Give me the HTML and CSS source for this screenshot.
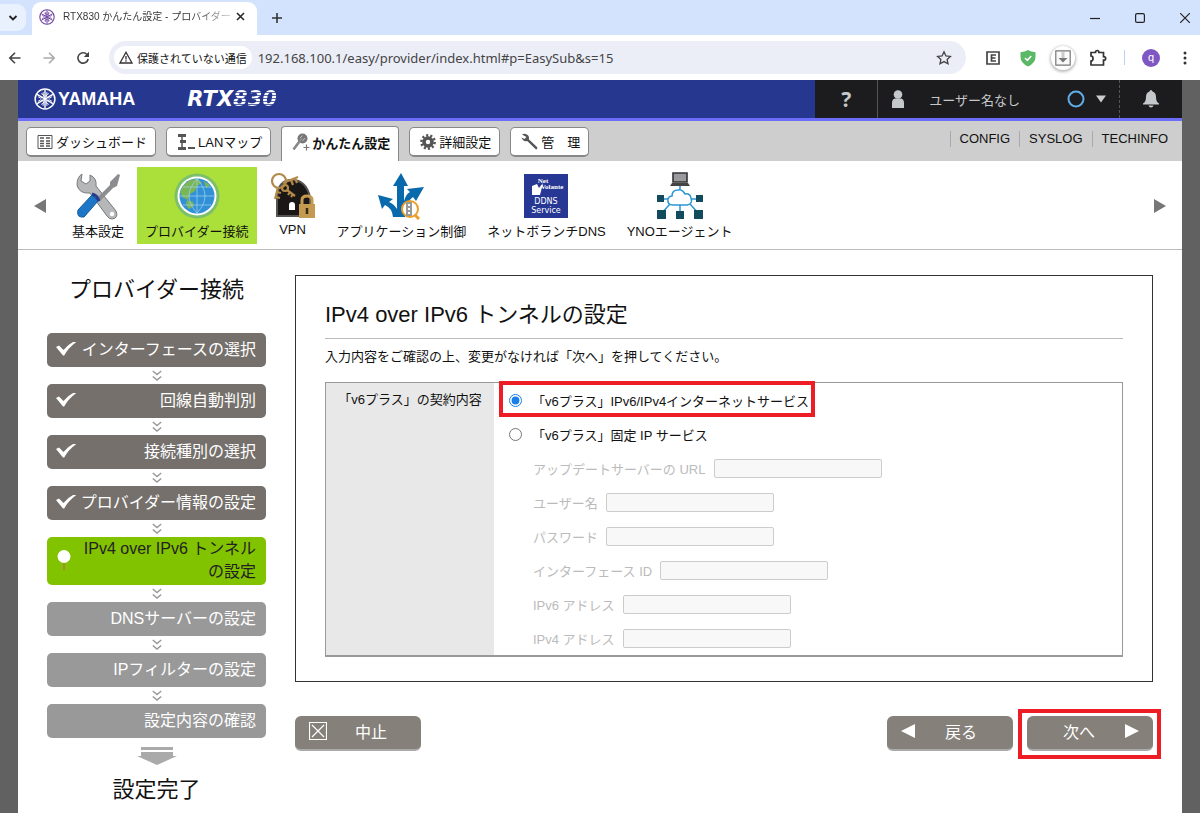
FILE: index.html
```html
<!DOCTYPE html>
<html lang="ja">

<head>
    <meta charset="UTF-8" />
    <meta name="viewport" content="width=device-width, initial-scale=1.0" />
    <title>RTX830 かんたん設定 - プロバイダー接続</title>
    <link rel="stylesheet" href="styles.css">
</head>

<body>

    <!-- Shared shapes -->
    <svg class="defs" width="0" height="0" aria-hidden="true">
        <symbol id="emblem" viewBox="0 0 24 24">
            <g fill="none" stroke="currentColor">
                <circle cx="12" cy="12" r="10.8" stroke-width="1.6" />
                <path d="M12 2v20M3.4 7l17.2 10M3.4 17L20.6 7" stroke-width="1.5" />
                <path d="M10 4.500v3l2 2 2-2v-3M10 19.500v-3l2-2 2 2v3M4.500 9.500l2.600 1.500 2.700-.7.700-2.700-2.600-1.500M19.500 14.500l-2.600-1.500-2.700.7-.7 2.700 2.600 1.500M4.500 14.500l2.600-1.500 2.700.7.700 2.700-2.600 1.500M19.500 9.500l-2.600 1.500-2.700-.7-.7-2.700 2.600-1.500" stroke-width="1" />
            </g>
        </symbol>
        <symbol id="check" viewBox="0 0 20 14">
            <path d="M0 5l3-1.500 4.500 4.500Q12 2.500 17 0h3.200Q12 6 8.200 13.500H7z" fill="#fff" />
        </symbol>
        <symbol id="chevrons" viewBox="0 0 10 11">
            <path d="M.8 1L5 4.500 9.200 1M.8 6.500L5 10l4.200-3.500" fill="none" stroke="#999" stroke-width="1.500" />
        </symbol>
    </svg>

    <!-- Browser tab strip -->
    <div class="tabstrip">
        <button class="tab-search" aria-label="タブを検索">
            <svg width="10" height="10" viewBox="0 0 10 10"><path d="M1.500 3L5 6.500 8.500 3" fill="none" stroke="#222" stroke-width="1.800" /></svg>
        </button>
        <div class="browser-tab">
            <svg class="favicon" width="16" height="16"><use href="#emblem" /></svg>
            <span class="tab-title">RTX830 かんたん設定 - プロバイダー</span>
            <button class="plain" aria-label="閉じる">
                <svg width="9" height="9" viewBox="0 0 9 9"><path d="M1 1l7 7M8 1L1 8" stroke="#222" stroke-width="1.500" /></svg>
            </button>
        </div>
        <button class="plain new-tab" aria-label="新しいタブ">
            <svg width="10" height="10" viewBox="0 0 10 10"><path d="M5 0v10M0 5h10" stroke="#333" stroke-width="1.600" /></svg>
        </button>
        <div class="window-controls">
            <svg width="10" height="10" viewBox="0 0 10 10"><path d="M0 5.500h10" stroke="#222" stroke-width="1.200" /></svg>
            <svg width="10" height="10" viewBox="0 0 10 10"><rect x=".6" y=".6" width="8.800" height="8.800" rx="1.500" fill="none" stroke="#222" stroke-width="1.200" /></svg>
            <svg width="10" height="10" viewBox="0 0 10 10"><path d="M0 0l10 10M10 0L0 10" stroke="#222" stroke-width="1.200" /></svg>
        </div>
    </div>

    <!-- Browser toolbar -->
    <div class="toolbar">
        <div class="nav-buttons">
            <button class="plain" aria-label="戻る"><svg width="16" height="16" viewBox="0 0 16 16"><path d="M13.500 8H3M8 2.800L2.800 8 8 13.200" fill="none" stroke="#444" stroke-width="1.600" /></svg></button>
            <button class="plain" aria-label="進む"><svg width="16" height="16" viewBox="0 0 16 16"><path d="M2.500 8H13M8 2.800L13.200 8 8 13.200" fill="none" stroke="#aaa" stroke-width="1.600" /></svg></button>
            <button class="plain" aria-label="再読み込み"><svg width="16" height="16" viewBox="0 0 16 16"><path d="M13.200 9A5.200 5.200 0 1 1 12 4.500L13 5.800" fill="none" stroke="#444" stroke-width="1.600" /><path d="M14 1.800V7H8.800z" fill="#444" /></svg></button>
        </div>
        <div class="omnibox">
            <span class="security">
                <svg width="14" height="13" viewBox="0 0 14 13"><path d="M7 1.300L13 12H1zM7 5v3.500M7 9.300v1.500" fill="none" stroke="#333" stroke-width="1.300" /></svg>
                保護されていない通信
            </span>
            <span class="url">192.168.100.1/easy/provider/index.html#p=EasySub&amp;s=15</span>
            <svg width="16" height="16" viewBox="0 0 16 16"><path d="M8 1.800l1.900 4.100 4.500.5-3.300 3 .9 4.400L8 11.600l-4 2.200.9-4.400-3.300-3 4.500-.5z" fill="none" stroke="#444" stroke-width="1.300" /></svg>
        </div>
        <div class="extensions">
            <svg width="18" height="18" viewBox="0 0 18 18"><path d="M3 3h12v12H3zM12 6H7.500v6H12M7.500 9h4" fill="none" stroke="#444" stroke-width="1.700" /></svg>
            <svg width="18" height="18" viewBox="0 0 18 18"><path d="M9 1q3 2 7.500 2.200V8q0 6-7.500 9.500Q1.500 14 1.500 8V3.200Q6 3 9 1z" fill="#5bb866" /><path d="M6 9l2.300 2.300L12.200 7" fill="none" stroke="#fff" stroke-width="1.500" /></svg>
            <span class="raised"><svg width="18" height="18" viewBox="0 0 18 18"><path d="M1.800 1.800h14.400v14.400H1.800z" fill="#fafafa" stroke="#777" stroke-width="1.200" /><path d="M7.500 3h3v6h-3z" fill="#ccc" /><path d="M4.500 9h9L9 13.500z" fill="#777" /></svg></span>
            <svg width="18" height="18" viewBox="0 0 18 18"><path d="M2 3.500h4.500q0-2 1.700-2t1.700 2h4.600v4.200q2.200 0 2.200 1.700t-2.200 1.700v4.900H2v-4q2 0 2-2.500t-2-2.500z" fill="none" stroke="#333" stroke-width="1.700" /></svg>
            <span class="divider"></span>
            <span class="avatar">q</span>
            <svg width="16" height="16" viewBox="0 0 16 16" fill="#333"><circle cx="8" cy="3" r="1.500" /><circle cx="8" cy="8" r="1.500" /><circle cx="8" cy="13" r="1.500" /></svg>
        </div>
    </div>

    <!-- Router settings page -->
    <div class="page">
        <header class="header">
            <div class="brand">
                <svg width="22" height="22"><use href="#emblem" /></svg>
                <span class="brand-name">YAMAHA</span>
                <span class="model">RTX<span class="model-number">830</span></span>
            </div>
            <div class="status">
                <a class="help" href="#" aria-label="ヘルプ">?</a>
                <div class="user">
                    <svg width="14" height="18" viewBox="0 0 14 18" fill="#c5c8ca"><circle cx="7" cy="4.500" r="4.300" /><path d="M1 18v-5q0-4 3-4.500h6q3 .5 3 4.500v5z" /></svg>
                    <span class="user-name">ユーザー名なし</span>
                    <svg width="18" height="18" viewBox="0 0 18 18"><circle cx="9" cy="9" r="7.500" fill="none" stroke="#5eaee8" stroke-width="2" /></svg>
                    <svg width="10" height="8" viewBox="0 0 10 8"><path d="M0 .5h10L5 7.500z" fill="#ccc" /></svg>
                </div>
                <a class="bell" href="#" aria-label="通知">
                    <svg width="16" height="18" viewBox="0 0 16 18" fill="#c5c8ca"><path d="M8 0q1.200 0 1.500 1.500Q13 2.500 13 7q0 5 3 6.500v1H0v-1Q3 12 3 7q0-4.500 3.500-5.500Q6.800 0 8 0zM5.500 15.500h5Q10 17.500 8 17.500t-2.500-2z" /></svg>
                </a>
            </div>
        </header>

        <nav class="tabs">
            <a class="tab" href="#">
                <svg width="16" height="16" viewBox="0 0 16 16"><path d="M1 1.500h14v13H1z" fill="#fff" stroke="#555" /><path d="M3 4h4M3 7h4M3 9.500h4M3 12h4M9 4h4M9 7h4M9 9.500h4M9 12h4" stroke="#555" stroke-width="1.600" /></svg>
                ダッシュボード</a>
            <a class="tab" href="#">
                <svg width="18" height="18" viewBox="0 0 18 18"><path d="M1 1h8v3H1zM3 7h6v3H3zM1 14h8v3H1zM11 14h7v2h-7z" fill="#555" /><path d="M5 2v14" stroke="#555" stroke-width="1.500" /></svg>
                LANマップ</a>
            <a class="tab active" href="#">
                <svg width="18" height="18" viewBox="0 0 18 18"><circle cx="10.500" cy="5.500" r="5" fill="#777" /><path d="M10 5L1.500 16.500" stroke="#888" stroke-width="2.600" /><path d="M8 5l2.500-2.500M10.500 8L13 5" stroke="#bbb" /><path d="M14.500 11.500v6M11.500 14.500h6" stroke="#777" stroke-width="1.200" /></svg>
                かんたん設定</a>
            <a class="tab" href="#">
                <svg width="16" height="16" viewBox="0 0 16 16"><circle cx="8" cy="8" r="4" fill="none" stroke="#555" stroke-width="3.600" /><circle cx="8" cy="8" r="6.600" fill="none" stroke="#555" stroke-width="2.600" stroke-dasharray="2.100 2.047" /></svg>
                詳細設定</a>
            <a class="tab" href="#">
                <svg width="17" height="17" viewBox="0 0 17 17"><path d="M1 1.500Q4-.5 7 2.200 8.500 4 7.800 6.200L16 14q1 2-1 2.500L6.200 8Q2 9 .5 4.500L3.500 6 5.500 4z" fill="#555" /></svg>
                管　理</a>
            <div class="tools">
                <a href="#">CONFIG</a>
                <a href="#">SYSLOG</a>
                <a href="#">TECHINFO</a>
            </div>
        </nav>

        <nav class="submenu">
            <button class="plain" aria-label="前へ"><svg width="12" height="14" viewBox="0 0 12 14"><path d="M12 0v14L0 7z" fill="#777" /></svg></button>
            <div class="menu-items">
                <a class="item" href="#">
                    <svg width="46" height="48" viewBox="0 0 46 48">
                        <path d="M7 2l-1 7 5 3 4-3V3q7 3 6 11l20 25q3 7-4 8-3 0-5-3L15 21Q4 22 2 13q0-8 5-11z" fill="#b5b7b9" stroke="#77797b" />
                        <circle cx="37" cy="42" r="2.200" fill="#fff" />
                        <path d="M35 10l8-8 2 1-3 11-4 2L24 30l-3-3 14-14z" fill="#8b8d8f" />
                        <path d="M17 23l6 6L9 45Q1 46 3 38z" fill="#1d77c6" stroke="#145997" />
                        <path d="M17 22q5 1 7 7" fill="none" stroke="#233b91" stroke-width="3" />
                    </svg>
                    基本設定</a>
                <a class="item current" href="#">
                    <svg width="46" height="48" viewBox="0 0 46 48">
                        <circle cx="23" cy="24" r="22.500" fill="#7dc06b" />
                        <circle cx="23" cy="24" r="19.500" fill="#fff" />
                        <circle cx="23" cy="24" r="17.500" fill="#3291d6" />
                        <path d="M9 14Q15 6 24 7l4 4-5 3-2 5-5 3-2 6-6-3-2-5zM30 9l6 4-4 3zM13 28l6 2 1 4-5 3q-4-3-2-9z" fill="#7ab656" />
                        <path d="M23 7v34M6 24h34M9 15h28M9 33h28M23 7q-16 17 0 34M23 7q16 17 0 34" fill="none" stroke="#a5d3ee" stroke-width=".7" />
                    </svg>
                    プロバイダー接続</a>
                <a class="item" href="#">
                    <svg width="46" height="46" viewBox="0 0 46 46">
                        <path d="M7 44V25Q8 8 22 8t18 17v19z" fill="#1b1716" stroke="#565453" stroke-width="2" />
                        <path d="M19 38v-5q0-3 3-3t3 3v5z" fill="#fff" />
                        <g fill="none" stroke="#b38a47" stroke-width="2.200">
                            <circle cx="9" cy="9" r="7" />
                            <path d="M13 11l15-6M21 8l2 5M25 6l2 5M8 15L5 27M7 20l4 1M6 25l4 1" />
                            <circle cx="15" cy="16" r="3" />
                            <path d="M17 18l8 6M20 20l-2 3M23 22l-2 3" />
                        </g>
                        <path d="M32 33v-5q0-4 5-4t5 4v5" fill="none" stroke="#c49a50" stroke-width="3" />
                        <path d="M29 32h16v14H29z" fill="#c39a50" /><path d="M37 36v6" stroke="#352814" stroke-width="2.500" />
                    </svg>
                    VPN</a>
                <a class="item" href="#">
                    <svg width="46" height="48" viewBox="0 0 46 48">
                        <path d="M23 1l7 13h-4v15q2-7 6-9l-3-3 17-2-8 14-3-4q-6 5-7 9l-1 11H15q-1-9-8-12l-3 4-4-14 15 4-4 3q5 2 8 7V14h-4z" fill="#0869ad" />
                        <circle cx="32" cy="37" r="8" fill="#fff" stroke="#ec9e26" stroke-width="2" />
                        <path d="M37 43l4 4" stroke="#ec9e26" stroke-width="3" />
                        <path d="M28 30h6v14h-6z" fill="#999" /><path d="M31 32v2M31 36v2M31 40v2" stroke="#fff" stroke-width="2" />
                    </svg>
                    アプリケーション制御</a>
                <a class="item" href="#">
                    <svg width="46" height="48" viewBox="0 0 46 48">
                        <path d="M1 2h44v44H1z" fill="#273894" />
                        <path d="M9 14l5-2 2 4 4-5-3 12H9z" fill="#fff" />
                        <g fill="#fff" text-anchor="middle">
                            <text x="20" y="11" class="ddns-small">Net</text>
                            <text x="29" y="17" class="ddns-small">Volante</text>
                            <text x="23" y="32" class="ddns-text">DDNS</text>
                            <text x="23" y="41" class="ddns-text">Service</text>
                        </g>
                    </svg>
                    ネットボランチDNS</a>
                <a class="item" href="#">
                    <svg width="48" height="48" viewBox="0 0 48 48">
                        <path d="M24 12v5M3 27h42M14 32L5 42M24 32v10M34 32l9 10" stroke="#2b96d4" stroke-width="1.500" />
                        <path d="M17 33q-6 0-5-6 1-3 4-3 0-6 6-6 4-1 7 4 5-1 6 4 2 6-4 7z" fill="#fff" stroke="#2b96d4" stroke-width="1.500" />
                        <path d="M17 1h14v9H17z" fill="#9a999e" stroke="#333" stroke-width="1.600" /><path d="M16 11h16l2 3H14z" fill="#444" />
                        <path d="M1 23h7v7H1zM40 23h7v7h-7zM1 38h9v9H1zM20 39h8v8h-8zM38 38h9v9h-9z" fill="#124b5b" />
                    </svg>
                    YNOエージェント</a>
            </div>
            <button class="plain" aria-label="次へ"><svg width="12" height="14" viewBox="0 0 12 14"><path d="M0 0v14l12-7z" fill="#777" /></svg></button>
        </nav>

        <div class="content">
            <aside class="sidebar">
                <h2>プロバイダー接続</h2>
                <ol class="steps">
                    <li class="step done"><svg width="20" height="14"><use href="#check" /></svg><span>インターフェースの選択</span></li>
                    <li class="next"><svg width="10" height="11"><use href="#chevrons" /></svg></li>
                    <li class="step done"><svg width="20" height="14"><use href="#check" /></svg><span>回線自動判別</span></li>
                    <li class="next"><svg width="10" height="11"><use href="#chevrons" /></svg></li>
                    <li class="step done"><svg width="20" height="14"><use href="#check" /></svg><span>接続種別の選択</span></li>
                    <li class="next"><svg width="10" height="11"><use href="#chevrons" /></svg></li>
                    <li class="step done"><svg width="20" height="14"><use href="#check" /></svg><span>プロバイダー情報の設定</span></li>
                    <li class="next"><svg width="10" height="11"><use href="#chevrons" /></svg></li>
                    <li class="step now">
                        <svg width="16" height="22" viewBox="0 0 16 22"><path d="M8 12v9" stroke="#a58a3c" stroke-width="2" /><circle cx="8" cy="7.500" r="6.500" fill="#fff" /></svg>
                        <span>IPv4 over IPv6 トンネル<br>の設定</span>
                    </li>
                    <li class="next"><svg width="10" height="11"><use href="#chevrons" /></svg></li>
                    <li class="step"><span>DNSサーバーの設定</span></li>
                    <li class="next"><svg width="10" height="11"><use href="#chevrons" /></svg></li>
                    <li class="step"><span>IPフィルターの設定</span></li>
                    <li class="next"><svg width="10" height="11"><use href="#chevrons" /></svg></li>
                    <li class="step"><span>設定内容の確認</span></li>
                </ol>
                <svg class="finish-arrow" width="40" height="18" viewBox="0 0 40 18"><path d="M4 0h32v3H4zM4 5h32v4h4l-20 9L0 9h4z" fill="#aaa" /></svg>
                <p class="finish">設定完了</p>
            </aside>

            <form class="main">
                <section class="panel">
                    <h1>IPv4 over IPv6 トンネルの設定</h1>
                    <p>入力内容をご確認の上、変更がなければ「次へ」を押してください。</p>
                    <table class="settings">
                        <tr>
                            <th scope="row">「v6プラス」の契約内容</th>
                            <td>
                                <div class="row marked">
                                    <input type="radio" name="service" id="standard" checked>
                                    <label for="standard">「v6プラス」IPv6/IPv4インターネットサービス</label>
                                </div>
                                <div class="row">
                                    <input type="radio" name="service" id="fixed">
                                    <label for="fixed">「v6プラス」固定 IP サービス</label>
                                </div>
                                <div class="row sub"><label for="server">アップデートサーバーの URL</label><input type="text" id="server" disabled></div>
                                <div class="row sub"><label for="user">ユーザー名</label><input type="text" id="user" disabled></div>
                                <div class="row sub"><label for="password">パスワード</label><input type="password" id="password" disabled></div>
                                <div class="row sub"><label for="interface">インターフェース ID</label><input type="text" id="interface" disabled></div>
                                <div class="row sub"><label for="ipv6">IPv6 アドレス</label><input type="text" id="ipv6" disabled></div>
                                <div class="row sub"><label for="ipv4">IPv4 アドレス</label><input type="text" id="ipv4" disabled></div>
                            </td>
                        </tr>
                    </table>
                </section>
                <div class="actions">
                    <button type="button" class="btn"><svg width="18" height="18" viewBox="0 0 18 18"><path d="M.5.5h17v17H.5zM3 3l12 12M15 3L3 15" fill="none" stroke="#fff" stroke-width="1.200" /></svg><span>中止</span></button>
                    <button type="button" class="btn back"><svg width="14" height="14" viewBox="0 0 14 14"><path d="M14 0v14L0 7z" fill="#fff" /></svg><span>戻る</span></button>
                    <div class="marked">
                        <button type="button" class="btn forward"><span>次へ</span><svg width="14" height="14" viewBox="0 0 14 14"><path d="M0 0v14l14-7z" fill="#fff" /></svg></button>
                    </div>
                </div>
            </form>
        </div>
    </div>

</body>

</html>
```
FILE: styles.css
```css
* {
    box-sizing: border-box;
}

body {
    font-family: "Liberation Sans", "Noto Sans CJK JP", sans-serif;
    font-size: 13px;
    color: #111;
    background-color: #616161;
    margin: 0;
    min-height: 100vh;
    display: flex;
    flex-direction: column;
}

svg {
    display: block;
    flex: none;
}

.defs {
    position: absolute;
}

a {
    color: inherit;
    text-decoration: none;
}

button {
    font-family: inherit;
    cursor: pointer;
}

.plain {
    border: none;
    background: none;
    padding: 0;
}

/* Browser */
.tabstrip {
    background-color: #d3e2fd;
    height: 35px;
    display: flex;
    align-items: center;
}

.tab-search {
    width: 26px;
    height: 27px;
    border: none;
    border-radius: 0 9px 9px 0;
    background-color: #e9f1fe;
    padding: 0 0 0 8px;
    margin-right: 6px;
}

.browser-tab {
    align-self: flex-end;
    width: 225px;
    height: 33px;
    background-color: #fff;
    border-radius: 9px 9px 0 0;
    display: flex;
    align-items: center;
    padding: 0 12px 4px 7px;
}

.favicon {
    color: #6b3fa0;
}

.tab-title {
    flex: 1;
    margin: 0 4px 0 8px;
    white-space: nowrap;
    font-size: 10px;
    line-height: 18px;
    color: transparent;
    background: linear-gradient(to right, #333 75%, #ccc);
    -webkit-background-clip: text;
    background-clip: text;
}

.new-tab {
    margin-left: 15px;
}

.window-controls {
    margin-left: auto;
    margin-right: 10px;
    display: flex;
    gap: 35px;
}

.toolbar {
    background-color: #fff;
    height: 45px;
    padding: 0 7px;
    display: flex;
    align-items: center;
    gap: 18px;
}

.nav-buttons {
    display: flex;
    gap: 18px;
}

.omnibox {
    flex: 1;
    height: 33px;
    border-radius: 17px;
    background-color: #ebeef7;
    padding: 0 14px 0 5px;
    display: flex;
    align-items: center;
}

.security {
    height: 23px;
    border-radius: 12px;
    background-color: #fff;
    padding: 0 5px;
    display: flex;
    align-items: center;
    gap: 4px;
    font-size: 11px;
    margin-right: 6px;
}

.url {
    flex: 1;
    font-family: "Noto Sans", sans-serif;
    font-size: 13px;
    color: #444;
}

.extensions {
    display: flex;
    align-items: center;
    gap: 17px;
}

.raised {
    border-radius: 50%;
    background-color: #fff;
    box-shadow: 0 0 0 3px #fff, 0 1px 3px 4px #bbb;
}

.divider {
    width: 1px;
    height: 15px;
    background-color: #b9d2f8;
}

.avatar {
    width: 18px;
    height: 18px;
    border-radius: 50%;
    background-color: #7e57c2;
    color: #fff;
    font-size: 11px;
    line-height: 17px;
    text-align: center;
}

/* Header */
.page {
    flex: 1;
    margin: 0 18px;
    background-color: #fff;
}

.header {
    height: 41px;
    background-color: #26378f;
    border-bottom: 3px solid #6c6cfa;
    display: flex;
    justify-content: space-between;
}

.brand {
    display: flex;
    align-items: center;
    color: #fff;
    padding-left: 16px;
}

.brand-name {
    font-size: 18px;
    font-weight: bold;
    margin: 0 52px 0 2px;
}

.model {
    font-family: "DejaVu Sans", sans-serif;
    font-size: 21px;
    font-weight: bold;
    font-style: italic;
}

.model-number {
    color: transparent;
    background: repeating-linear-gradient(#fff 0 2px, #5a68ac 2px 3px);
    -webkit-background-clip: text;
    background-clip: text;
}

.status {
    background-color: #1c1b1e;
    color: #c5c8ca;
    display: flex;
}

.help,
.user,
.bell {
    display: flex;
    align-items: center;
    justify-content: center;
}

.help,
.bell {
    width: 62px;
}

.help {
    font-family: "Noto Sans", sans-serif;
    font-size: 21px;
    font-weight: bold;
}

.user {
    border-left: 1px solid #555;
    border-right: 1px dashed #555;
    padding: 0 13px;
}

.user-name {
    margin: 0 47px 0 24px;
}

.user svg:last-child {
    margin-left: 11px;
}

/* Tabs */
.tabs {
    height: 40px;
    background-color: #cecece;
    padding: 5px 5px 0 8px;
    display: flex;
    align-items: flex-start;
    gap: 10px;
}

.tab {
    height: 30px;
    margin-top: 1px;
    padding: 0 8px 0 10px;
    background-color: #fff;
    border: 1px solid #888;
    border-bottom-width: 2px;
    border-radius: 5px;
    display: flex;
    align-items: center;
    gap: 3px;
    white-space: nowrap;
}

.tab.active {
    height: 35px;
    margin-top: 0;
    border-bottom: none;
    border-radius: 4px 4px 0 0;
    font-weight: bold;
    padding-bottom: 4px;
    gap: 2px;
}

.tools {
    margin: 5px 0 0 auto;
    display: flex;
}

.tools a {
    border-left: 1px solid #aaa;
    padding: 0 9px;
    line-height: 16px;
}

/* Icon menu */
.submenu {
    padding: 6px 16px 5px;
    border-bottom: 1px solid #bbb;
    display: flex;
    align-items: center;
}

.menu-items {
    flex: 1;
    display: flex;
    gap: 5px;
    margin-left: 18px;
}

.item {
    height: 77px;
    padding: 5px 8px 0;
    display: flex;
    flex-direction: column;
    align-items: center;
    gap: 2px;
    line-height: 19px;
    white-space: nowrap;
}

.item.current {
    background-color: #abe03a;
}

.ddns-small {
    font-family: "Liberation Serif", serif;
    font-size: 7px;
    font-weight: bold;
}

.ddns-text {
    font-family: "DejaVu Sans", sans-serif;
    font-size: 8px;
}

/* Wizard steps */
.content {
    display: flex;
    gap: 29px;
    padding: 25px 29px 0;
}

.sidebar {
    flex: none;
    width: 219px;
    text-align: center;
}

.sidebar h2,
.finish {
    font-size: 22px;
    font-weight: normal;
    line-height: 30px;
    margin: 0;
}

.steps {
    list-style: none;
    margin: 28px 0 9px;
    padding: 0;
}

.step {
    height: 34px;
    border-radius: 5px;
    background-color: #999;
    color: #fff;
    font-size: 16px;
    line-height: 23px;
    text-align: right;
    padding: 0 10px 2px 9px;
    display: flex;
    align-items: center;
    justify-content: space-between;
}

.step span {
    margin-left: auto;
    white-space: nowrap;
}

.step.done {
    background-color: #75706b;
}

.step.now {
    height: 48px;
    background-color: #82c300;
    color: #222;
}

.next {
    height: 17px;
    display: flex;
    align-items: center;
    justify-content: center;
}

.finish-arrow {
    margin: 0 auto 10px;
}

/* Settings panel */
.main {
    flex: 1;
}

.panel {
    border: 1px solid #333;
    padding: 24px 29px;
}

.panel h1 {
    font-size: 22px;
    font-weight: normal;
    line-height: 30px;
    margin: 0;
    padding-bottom: 8px;
    border-bottom: 1px solid #bbb;
}

.panel p {
    line-height: 20px;
    margin: 8px 0 15px;
}

.settings {
    width: 100%;
    border: 1px solid #999;
    border-bottom-width: 2px;
    border-spacing: 0;
}

.settings th {
    width: 168px;
    background-color: #e8e8e8;
    font-weight: normal;
    vertical-align: top;
    line-height: 34px;
    padding: 0;
    white-space: nowrap;
}

.settings td {
    padding: 0 0 0 15px;
}

.row {
    width: max-content;
    height: 34px;
    display: flex;
    align-items: center;
}

.row input[type="radio"] {
    width: 13px;
    height: 13px;
    margin: 0 10px 0 0;
    accent-color: #1a7fe8;
}

.row.sub {
    padding-left: 24px;
    gap: 8px;
    color: #bbb;
}

.sub input {
    width: 168px;
    height: 19px;
    border: 1px solid #ccc;
    border-radius: 2px;
    background-color: #f8f8f8;
}

.actions {
    display: flex;
    gap: 14px;
    margin-top: 34px;
}

.btn {
    width: 126px;
    height: 35px;
    border: none;
    border-bottom: 2px solid #aaa;
    border-radius: 6px;
    background-color: #85807a;
    color: #fff;
    font-size: 16px;
    padding: 0 6px 3px 14px;
    display: flex;
    align-items: center;
}

.btn span {
    flex: 1;
    text-align: center;
}

.btn.back {
    margin-left: auto;
}

.btn.forward {
    padding: 0 14px 3px 6px;
}

/* Red frame that points out what to press */
.marked {
    position: relative;
}

.marked::after {
    content: "";
    position: absolute;
    inset: -7px -8px -8px -9px;
    border: 4px solid #ee1c24;
    pointer-events: none;
}

.row.marked::after {
    inset: -2px -6px 0 -10px;
}
```
